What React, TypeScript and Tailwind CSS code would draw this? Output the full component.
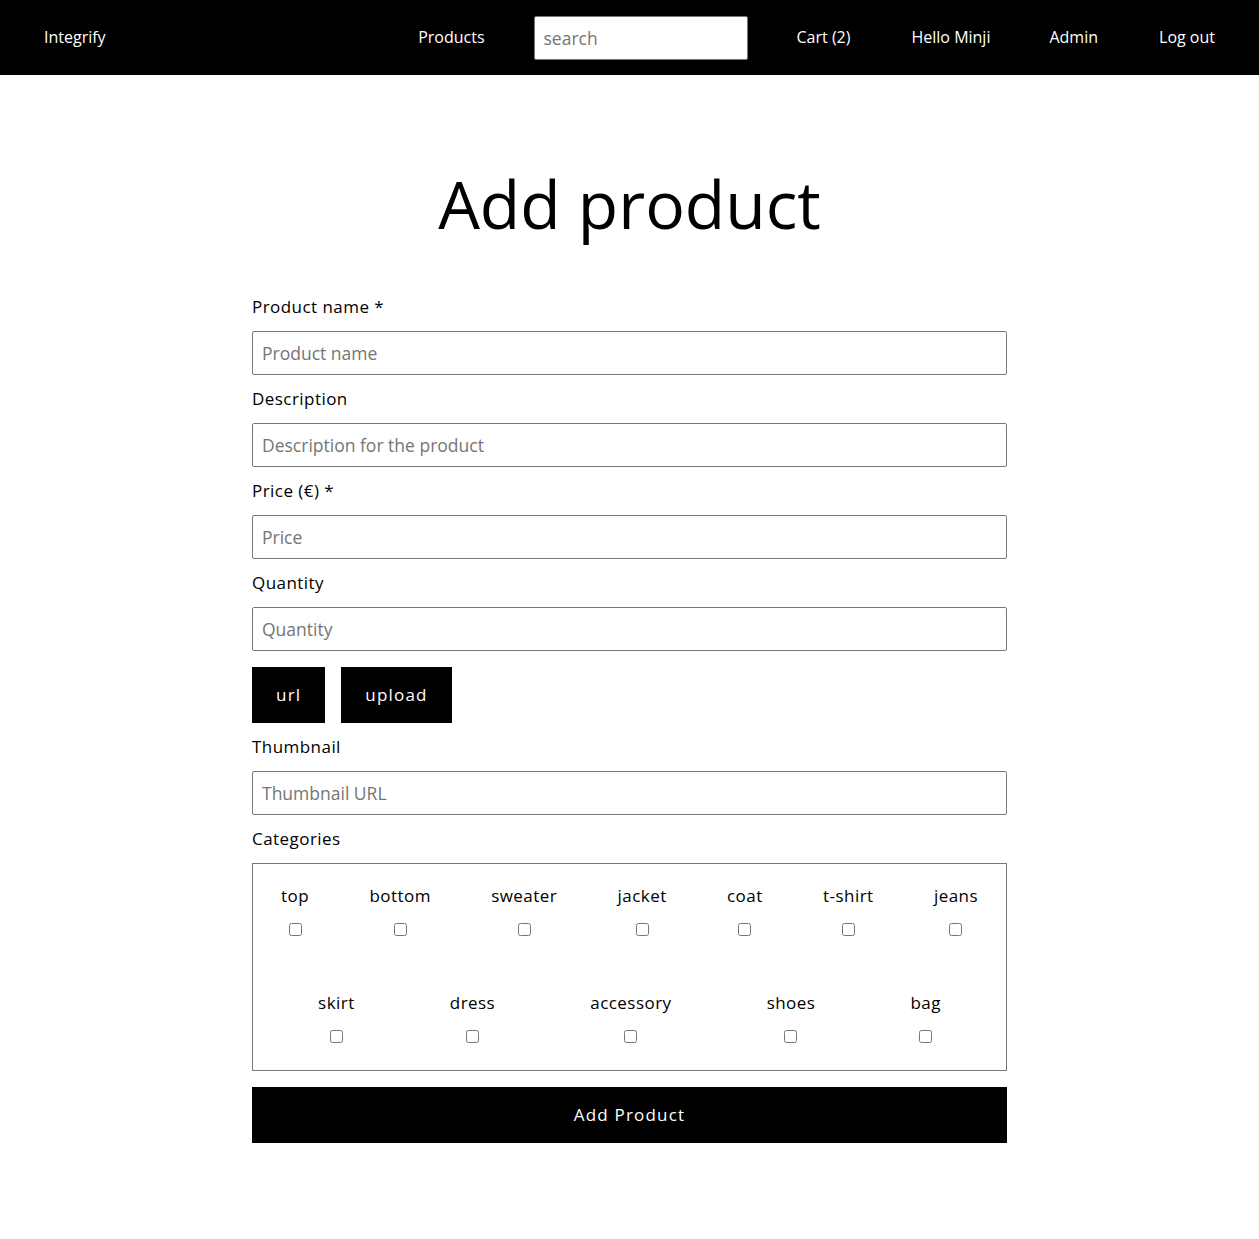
import React from 'react';

const fields = [
    {label: 'Product name *', placeholder: 'Product name'},
    {label: 'Description', placeholder: 'Description for the product'},
    {label: 'Price (€) *', placeholder: 'Price'},
    {label: 'Quantity', placeholder: 'Quantity'},
];

const topRow = ['top', 'bottom', 'sweater', 'jacket', 'coat', 't-shirt', 'jeans'];
const bottomRow = ['skirt', 'dress', 'accessory', 'shoes', 'bag'];

function Field({label, placeholder}: {label: string; placeholder: string}) {
    return (
        <div className="flex flex-col">
            <label className="mb-3 text-[17px] leading-6 tracking-[0.45px] text-black">{label}</label>
            <input
                type="text"
                placeholder={placeholder}
                className="mb-3 h-[44px] w-full rounded-[2px] border border-[#767676] bg-white pl-[9px] text-[17.5px] text-black outline-none placeholder:text-[#757575]"
            />
        </div>
    );
}

function Category({name}: {name: string}) {
    return (
        <div className="flex flex-col items-center">
            <span className="text-[17px] leading-6 tracking-[0.45px] text-black">{name}</span>
            <input type="checkbox" className="m-0 mt-[15px] h-[13px] w-[13px]" />
        </div>
    );
}

export default function App() {
    return (
        <div className="min-h-screen bg-white font-['Open_Sans',sans-serif]">
            {/* 顶部导航 */}
            <nav className="flex h-[75px] items-center justify-between bg-black px-[44px] pb-[2px] text-[16px] text-white">
                <a href="#">Integrify</a>
                <div className="flex items-center">
                    <a href="#">Products</a>
                    <input
                        type="text"
                        placeholder="search"
                        className="mt-[2px] ml-[49px] h-[44px] w-[214px] rounded-[2px] border border-[#767676] bg-white pl-[9px] text-[17.5px] text-black outline-none placeholder:text-[#757575]"
                    />
                    <a href="#" className="ml-[49px]">Cart (2)</a>
                    <a href="#" className="ml-[61px]">Hello Minji</a>
                    <a href="#" className="ml-[59px]">Admin</a>
                    <a href="#" className="ml-[61px]">Log out</a>
                </div>
            </nav>

            <main className="mx-auto w-[755px] pt-[83px] pb-24">
                <h1 className="text-center text-[66px] leading-[90px] text-black">Add product</h1>

                <form className="mt-[47px] flex flex-col">
                    {fields.map((f) => (
                        <Field key={f.label} label={f.label} placeholder={f.placeholder} />
                    ))}

                    <div className="mt-1 mb-3 flex gap-4">
                        <button type="button" className="h-[56px] bg-black px-6 text-[17px] tracking-[1.2px] text-white">url</button>
                        <button type="button" className="h-[56px] bg-black px-6 text-[17px] tracking-[1.2px] text-white">upload</button>
                    </div>

                    <Field label="Thumbnail" placeholder="Thumbnail URL" />

                    <label className="mb-3 text-[17px] leading-6 tracking-[0.45px] text-black">Categories</label>
                    <div className="border border-[#767676] pt-[20px] pb-[27px]">
                        <div className="flex justify-between px-7">
                            {topRow.map((c) => (
                                <Category key={c} name={c} />
                            ))}
                        </div>
                        <div className="mt-[55px] flex justify-evenly">
                            {bottomRow.map((c) => (
                                <div key={c} className="mx-[30px]">
                                    <Category name={c} />
                                </div>
                            ))}
                        </div>
                    </div>

                    <button type="button" className="mt-4 h-[56px] w-full bg-black text-[17px] tracking-[1.2px] text-white">
                        Add Product
                    </button>
                </form>
            </main>
        </div>
    );
}
